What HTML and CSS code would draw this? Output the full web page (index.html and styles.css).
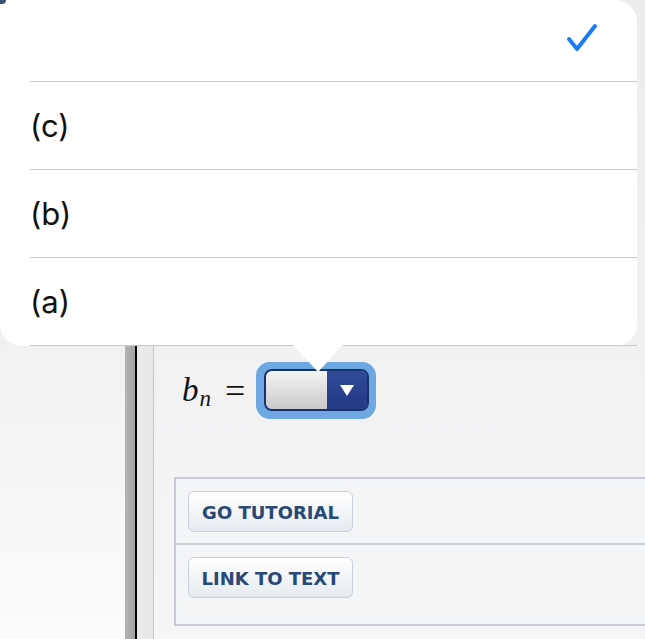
FILE: index.html
```html
<!DOCTYPE html>
<html lang="en">
<head>
  <meta charset="UTF-8">
  <meta name="viewport" content="width=device-width, initial-scale=1.0">
  <title>Question</title>
  <link rel="stylesheet" href="styles.css">
</head>
<body>

  <div class="page">
    <div class="side"></div>
    <div class="rule-grey"></div>
    <div class="rule-black"></div>
    <div class="gutter"></div>
    <div class="content">
      <div class="eq">
        <span class="math"><i>b</i><sub><i>n</i></sub></span>
        <span class="equals">=</span>
        <div class="select-wrap">
          <div class="select">
            <div class="select-box"></div>
            <div class="select-btn"><span class="tri"></span></div>
          </div>
        </div>
      </div>

      <div class="tools">
        <div class="tool-row">
          <button class="tool-btn">GO TUTORIAL</button>
        </div>
        <div class="tool-row">
          <button class="tool-btn">LINK TO TEXT</button>
        </div>
      </div>
    </div>
  </div>

  <!-- popup list for the select -->
  <div class="menu">
    <div class="item first">
      <svg class="check" width="32" height="30" viewBox="0 0 32 30">
        <path d="M3 16 L11 26 L29 3" fill="none" stroke="#1a7cf5" stroke-width="4" stroke-linecap="round" stroke-linejoin="round"/>
      </svg>
    </div>
    <div class="item">(c)</div>
    <div class="item">(b)</div>
    <div class="item">(a)</div>
    <div class="pointer"></div>
  </div>
  <div class="corner"></div>

</body>
</html>
```

FILE: styles.css
```css
* {
  margin: 0;
  padding: 0;
  box-sizing: border-box;
}

body {
  width: 645px;
  height: 639px;
  overflow: hidden;
  background: linear-gradient(#e6e6e6, #fbfbfb);
  font-family: "Liberation Sans", Arial, sans-serif;
}

.page {
  display: flex;
  height: 639px;
}

.side {
  width: 125px;
}

.rule-grey {
  width: 10px;
  background: linear-gradient(90deg, #b4b4b4, #a2a2a2);
}

.rule-black {
  width: 2px;
  background: #000;
}

.gutter {
  width: 17px;
  background: #e9e9ec;
  border-right: 1px solid #c4c4c8;
}

.content {
  flex: 1;
  background: linear-gradient(#ececee, #f6f6f7);
  padding: 362px 0 0 20px;
}

.eq {
  display: flex;
  align-items: center;
  height: 57px;
  padding-left: 8px;
}

.math {
  font-family: "Liberation Serif", "Times New Roman", serif;
  font-size: 33px;
  color: #111;
  line-height: 1;
  margin-top: 2px;
}

.math sub {
  font-size: 23px;
  vertical-align: -5px;
  margin-left: 1px;
}

.equals {
  font-family: "Liberation Serif", serif;
  font-size: 36px;
  color: #111;
  margin: 0 11px 0 14px;
}

.select-wrap {
  width: 120px;
  height: 57px;
  border-radius: 14px;
  background: #6ea8e2;
  padding: 7px 7px 8px 8px;
}

.select {
  display: flex;
  height: 42px;
  border: 2px solid #18306b;
  border-radius: 8px;
  overflow: hidden;
}

.select-box {
  width: 61px;
  background: linear-gradient(#f4f4f4, #c9c9c9);
}

.select-btn {
  flex: 1;
  background: linear-gradient(#2f4b98, #233a84);
  display: flex;
  align-items: center;
  justify-content: center;
}

.tri {
  width: 0;
  height: 0;
  border-left: 7px solid transparent;
  border-right: 7px solid transparent;
  border-top: 11px solid #fff;
}

.tools {
  margin-top: 58px;
  border: 2px solid #c6ccd4;
  border-right: none;
  background: #f4f5f7;
  height: 149px;
}

.tool-row {
  padding: 12px 0 0 12px;
  height: 66px;
}

.tool-row:first-child {
  border-bottom: 2px solid #c6ccd4;
}

.tool-btn {
  width: 165px;
  height: 41px;
  border: 1px solid #c8d0dc;
  border-radius: 6px;
  background: linear-gradient(#ffffff, #e6eaf0);
  color: #284876;
  font-family: Verdana, "DejaVu Sans", sans-serif;
  font-weight: bold;
  font-size: 18px;
  padding-top: 1px;
}

.menu {
  position: absolute;
  top: 0;
  left: 0;
  width: 637px;
  height: 346px;
  background: #fff;
  border-radius: 0 22px 22px 22px;
}

.item {
  margin-left: 30px;
  height: 88px;
  border-bottom: 1px solid #c9c9cd;
  display: flex;
  align-items: center;
  font-family: Inter, "Liberation Sans", sans-serif;
  font-size: 31px;
  color: #111;
}

.item.first {
  height: 82px;
  justify-content: flex-end;
  padding-right: 39px;
}

.check {
  margin-top: -5px;
}

.pointer {
  position: absolute;
  left: 293px;
  top: 345px;
  width: 0;
  height: 0;
  border-left: 25px solid transparent;
  border-right: 25px solid transparent;
  border-top: 27px solid #fff;
}

.corner {
  position: absolute;
  top: 0;
  left: 0;
  width: 6px;
  height: 4px;
  background: #3b5270;
  border-radius: 0 0 4px 0;
}
```
